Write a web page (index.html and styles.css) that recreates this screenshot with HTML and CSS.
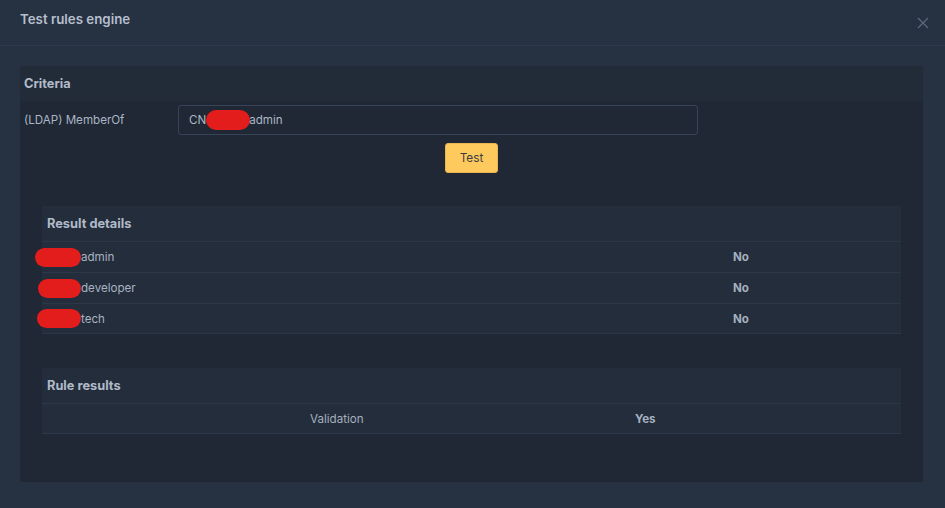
FILE: index.html
```html
<!DOCTYPE html>
<html>
<head>
<meta charset="utf-8">
<link rel="stylesheet" href="styles.css">
</head>
<body>
<div class="modal">
  <div class="modal-header">
    <h1 class="modal-title">Test rules engine</h1>
    <button class="close" aria-label="Close">
      <svg width="12" height="12" viewBox="0 0 12 12"><path d="M1 1L11 11M11 1L1 11" stroke="#5d6878" stroke-width="1.3" fill="none"/></svg>
    </button>
  </div>
  <div class="modal-body">
    <div class="card">
      <div class="card-header">Criteria</div>
      <div class="card-body">
        <div class="form-row">
          <label class="form-label">(LDAP) MemberOf</label>
          <div class="input">CN<span class="redact redact-input"></span>admin</div>
        </div>
        <div class="actions">
          <button class="btn-test">Test</button>
        </div>

        <div class="table details">
          <div class="table-head">Result details</div>
          <div class="row"><span class="name"><span class="redact r1"></span>admin</span><span class="val">No</span></div>
          <div class="row"><span class="name"><span class="redact r2"></span>developer</span><span class="val">No</span></div>
          <div class="row"><span class="name"><span class="redact r3"></span>tech</span><span class="val">No</span></div>
        </div>

        <div class="table rules">
          <div class="table-head">Rule results</div>
          <div class="row rule-row"><span></span><span class="rule-name">Validation</span><span class="val">Yes</span></div>
        </div>
      </div>
    </div>
  </div>
</div>
</body>
</html>
```
FILE: styles.css
```css
* { box-sizing: border-box; }
html, body { margin: 0; padding: 0; }
body {
  width: 945px;
  height: 508px;
  background: #263142;
  font-family: Inter, "Noto Sans", sans-serif;
  font-size: 11.6px;
  color: #a9b3c2;
  overflow: hidden;
}
.modal { height: 508px; display: flex; flex-direction: column; }
.modal-header {
  height: 46px;
  border-bottom: 1px solid #2e3a4b;
  display: flex;
  align-items: flex-start;
  justify-content: space-between;
  padding: 11px 16px 0 20px;
}
.modal-title {
  margin: 0;
  font-size: 13.3px;
  font-weight: 600;
  color: #b6bfcc;
  line-height: 17px;
}
.close {
  background: none;
  border: 0;
  padding: 0;
  margin-top: 6px;
  width: 12px;
  height: 12px;
  display: flex;
}
.modal-body { padding: 20px 22px 26px 20px; flex: 1; display: flex; }
.card { flex: 1; display: flex; flex-direction: column; background: #1f2834; }
.card-header {
  height: 35px;
  background: #222b38;
  padding: 0 4px;
  display: flex;
  align-items: center;
  font-weight: 700;
  font-size: 12.8px;
  color: #b0bac8;
}
.card-body { flex: 1; padding: 4px 22px 0 4px; display: flex; flex-direction: column; }
.form-row { display: flex; align-items: center; }
.form-label { width: 154px; color: #abb5c3; }
.input {
  width: 520px;
  height: 30px;
  border: 1px solid #36435a;
  border-radius: 3px;
  padding: 0 10px;
  display: flex;
  align-items: center;
  color: #aeb7c6;
}
.actions { display: flex; justify-content: center; margin-top: 8px; padding-left: 18px; }
.btn-test {
  width: 53px;
  height: 30px;
  background: #fec95d;
  border: 1px solid #e9b54e;
  border-radius: 3px;
  font-family: Inter, "Noto Sans", sans-serif;
  font-size: 11.8px;
  color: #3a3d44;
  padding: 0;
}
.table { background: #232d3b; margin-left: 18px; }
.details { margin-top: 33px; }
.rules { margin-top: 34px; }
.table-head {
  height: 35px;
  display: flex;
  align-items: center;
  padding-left: 5px;
  font-weight: 700;
  font-size: 12.8px;
  color: #b0bac8;
}
.row {
  height: 31px;
  border-top: 1px solid #2c3747;
  display: grid;
  grid-template-columns: 691px 1fr;
  align-items: center;
}
.row:last-child { border-bottom: 1px solid #2c3747; }
.name { display: flex; align-items: center; padding-left: 5px; color: #a8b2c1; }
.val { font-weight: 700; color: #a6b0bf; }
.rule-row { grid-template-columns: 268px 325px 1fr; }
.rule-name { color: #a6b0bf; }
.redact {
  display: inline-block;
  background: #e31c1c;
  border-radius: 10px;
  height: 19px;
}
.redact-input { width: 44px; height: 20px; margin-left: 0; margin-right: -1px; }
.r1 { width: 46px; margin-left: -12px; }
.r2 { width: 43px; margin-left: -9px; }
.r3 { width: 44px; margin-left: -10px; }
```
